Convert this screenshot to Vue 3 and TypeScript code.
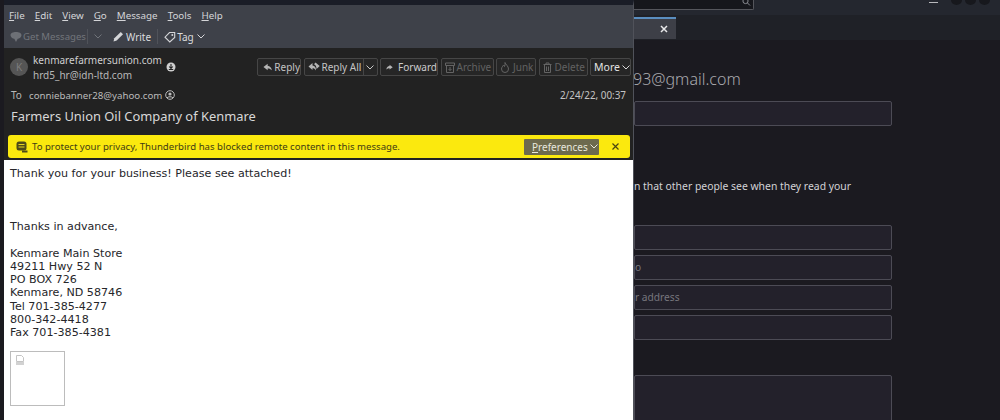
<script setup lang="ts">
const menus = [
  { key: 'F', rest: 'ile' },
  { key: 'E', rest: 'dit' },
  { key: 'V', rest: 'iew' },
  { key: 'G', rest: 'o' },
  { key: 'M', rest: 'essage' },
  { key: 'T', rest: 'ools' },
  { key: 'H', rest: 'elp' },
]
const bodyLines = [
  'Thank you for your business! Please see attached!',
  '', '', '',
  'Thanks in advance,',
  '',
  'Kenmare Main Store',
  '49211 Hwy 52 N',
  'PO BOX 726',
  'Kenmare, ND 58746',
  'Tel 701-385-4277',
  '800-342-4418',
  'Fax 701-385-4381',
]
</script>

<template>
  <div class="desktop">
    <section class="back">
      <header class="back-title">
        <div class="search"><svg class="search-icon" width="9" height="9" viewBox="0 0 9 9"><circle cx="3.5" cy="3" r="2.6" fill="none" stroke="#8a8c92"/><path d="M5.5 5l2.5 2.5" stroke="#8a8c92"/></svg></div>
        <div class="hamburger"></div>
        <div class="dots"><i></i><i></i><i></i></div>
      </header>
      <div class="back-tabs">
        <div class="tab"><svg width="8" height="8" viewBox="0 0 8 8"><path d="M1 1l6 6M7 1l-6 6" stroke="#e8e8ea" stroke-width="1.5"/></svg></div>
      </div>
      <div class="form">
        <div class="account">93@gmail.com</div>
        <div class="field first"></div>
        <p class="blurb">n that other people see when they read your</p>
        <div class="field-stack">
          <div class="field"></div>
          <div class="field ph">o</div>
          <div class="field ph">r address</div>
          <div class="field"></div>
        </div>
        <div class="field area"></div>
      </div>
    </section>

    <section class="mail">
      <div class="chrome">
        <nav class="menu">
          <span v-for="m in menus" :key="m.key"><u>{{ m.key }}</u>{{ m.rest }}</span>
        </nav>
        <div class="toolbar">
          <span class="tool off">
            <svg width="12" height="12" viewBox="0 0 12 12"><path d="M6 1c3 0 5.500 1 5.500 3.200 0 2-2.200 3.300-3.800 3.600L6 11 4.300 7.800C2.700 7.500.5 6.200.5 4.200.5 2 3 1 6 1z" fill="#6d7076"/></svg>
            Get Messages
          </span>
          <i class="sep"></i>
          <svg class="chev dim" width="8" height="5" viewBox="0 0 8 5"><path d="M.5.5L4 4 7.500.5" fill="none" stroke="#70747a"/></svg>
          <span class="tool write">
            <svg width="11" height="11" viewBox="0 0 11 11"><path d="M.5 10.500l.8-3.200L7.800 1l2.200 2.200-6.300 6.400z" fill="#d4d5d8"/></svg>
            Write
          </span>
          <i class="sep"></i>
          <span class="tool tag">
            <svg width="12" height="12" viewBox="0 0 12 12"><path d="M5.500 1.500h5.200v5L5.800 11 1 6.200z" fill="none" stroke="#d4d5d8" stroke-width="1.100"/><circle cx="8.300" cy="3.900" r="1" fill="#d4d5d8"/></svg>
            Tag
            <svg class="chev" width="8" height="5" viewBox="0 0 8 5"><path d="M.5.5L4 4 7.500.5" fill="none" stroke="#d4d5d8"/></svg>
          </span>
        </div>
      </div>

      <div class="head">
        <div class="from-row">
          <div class="avatar">K</div>
          <div class="from">
            <div class="from-name">kenmarefarmersunion.com</div>
            <div class="from-addr">hrd5_hr@idn-ltd.com</div>
          </div>
          <svg class="badge" width="10" height="10" viewBox="0 0 10 10"><circle cx="5" cy="5" r="4.500" fill="#cfcfcf"/><path d="M5 2v3.500M3.200 4.500L5 6.500l1.800-2M2.800 7.500h4.400" stroke="#222" stroke-width="1.100" fill="none"/></svg>
          <div class="actions">
            <button class="btn reply">
              <svg width="10" height="9" viewBox="0 0 10 9"><path d="M5 .5L.5 4 5 7.500V5.500c1.500 0 3 .3 4.500 2C9.200 4.500 7.500 2.800 5 2.500z" fill="#b5b5b5"/></svg>
              Reply
            </button>
            <div class="btn split">
              <span class="split-main">
                <svg width="12" height="10" viewBox="0 0 12 10"><path d="M4.500 1L.5 4.500 4.500 8V6.200c1.500 0 2.500.5 3.500 2.300.2-3-1.200-4.600-3.500-5zM7.500.5L11.700 4 8.500 7C8.500 4.800 7.800 3.200 6 2.300z" fill="#b5b5b5"/></svg>
                Reply All
              </span>
              <span class="split-arrow"><svg width="8" height="5" viewBox="0 0 8 5"><path d="M.5.500L4 4 7.500.5" fill="none" stroke="#c8c8c8"/></svg></span>
            </div>
            <button class="btn fwd">
              <svg width="10" height="9" viewBox="0 0 10 9"><path d="M5 .5L9.500 4 5 7.500V5.500c-1.500 0-3 .3-4.500 2C.8 4.500 2.500 2.800 5 2.500z" fill="#b5b5b5"/></svg>
              Forward
            </button>
            <button class="btn off arch">
              <svg width="10" height="11" viewBox="0 0 10 11"><path d="M.5 1h9v2.500h-9zM1.500 3.500h7v7h-7zM5 5v3.500M3.500 7L5 8.500 6.500 7" fill="none" stroke="#646464"/></svg>
              Archive
            </button>
            <button class="btn off junk">
              <svg width="10" height="11" viewBox="0 0 10 11"><path d="M5 .5c.5 2 3.500 3.500 3.500 6.500a3.500 3.500 0 0 1-7 0C1.500 5 3 4.500 3.500 3c.5.500.8.800 1 1.500C5 3.500 5.300 2 5 .5z" fill="none" stroke="#646464"/></svg>
              Junk
            </button>
            <button class="btn off del">
              <svg width="9" height="11" viewBox="0 0 9 11"><path d="M.5 2.500h8M3 2.500V1h3v1.500M1.500 2.500v8h6v-8M3.500 4.500v4.500M5.500 4.500v4.500" fill="none" stroke="#646464"/></svg>
              Delete
            </button>
            <button class="btn more">
              More
              <svg width="8" height="5" viewBox="0 0 8 5"><path d="M.5.500L4 4 7.500.5" fill="none" stroke="#d8d8d8"/></svg>
            </button>
          </div>
        </div>
        <div class="to-row">
          <span class="to-label">To</span>
          <span class="to-addr">conniebanner28@yahoo.com</span>
          <svg width="10" height="10" viewBox="0 0 10 10"><circle cx="5" cy="5" r="4.300" fill="none" stroke="#bdbdbd"/><circle cx="5" cy="4" r="1.600" fill="#bdbdbd"/><path d="M2 8c.7-1.700 5.300-1.700 6 0" stroke="#bdbdbd" fill="none"/></svg>
          <span class="date">2/24/22, 00:37</span>
        </div>
        <div class="subject">Farmers Union Oil Company of Kenmare</div>
      </div>

      <div class="notice">
        <svg class="notice-icon" width="12" height="12" viewBox="0 0 12 12"><rect x=".5" y=".5" width="10" height="9" rx="2.500" fill="#4d4a1a"/><path d="M2.500 3.500h6M2.500 6h6" stroke="#e6d320" stroke-width="1"/><path d="M6 9.500h5.500v2H6z" fill="#4d4a1a"/></svg>
        <span class="notice-text">To protect your privacy, Thunderbird has blocked remote content in this message.</span>
        <span class="prefs"><u>P</u>references<svg width="8" height="5" viewBox="0 0 8 5"><path d="M.5.500L4 4 7.500.5" fill="none" stroke="#e8e8e0"/></svg></span>
        <svg class="notice-close" width="7" height="7" viewBox="0 0 7 7"><path d="M.5.500l6 6M6.500.500l-6 6" stroke="#4a4510" stroke-width="1.200"/></svg>
      </div>

      <article class="body">
        <div v-for="(line, i) in bodyLines" :key="i" class="line">{{ line }}</div>
        <div class="broken">
          <svg width="10" height="11" viewBox="0 0 10 11"><path d="M1.500.5h5l2 2v4h-7z" fill="#fff" stroke="#c4c4c4"/><rect x="1" y="7" width="8" height="3" fill="#d2d2d2"/></svg>
        </div>
      </article>
    </section>
  </div>
</template>

<style scoped>
.desktop {
  position: relative;
  width: 1000px;
  height: 420px;
  overflow: hidden;
  background: #1b1a20;
  font-family: "Noto Sans", "Open Sans", sans-serif;
}
.back {
  display: flex;
  flex-direction: column;
  height: 100%;
  padding-left: 634px;
  box-sizing: border-box;
}
.back-title {
  height: 15px;
  flex: none;
  display: flex;
  align-items: flex-start;
  background: #24272f;
  position: relative;
}
.search {
  width: 119px;
  height: 9px;
  background: #16171c;
  border: 1px solid #55565c;
  border-top: 0;
  border-left: 0;
  border-radius: 0 0 2px 0;
  position: relative;
}
.search-icon {
  position: absolute;
  right: 2px;
  top: -2px;
}
.hamburger {
  width: 9px;
  height: 2px;
  margin: 0 0 0 175px;
  border-bottom: 1px solid #b8b9bd;
}
.dots {
  display: flex;
  gap: 3px;
  margin-left: 13px;
  margin-top: -5px;
}
.dots i {
  width: 11px;
  height: 10px;
  border-radius: 50%;
  background: #17181d;
}
.back-tabs {
  height: 25px;
  flex: none;
  background: #1f2127;
}
.tab {
  width: 42px;
  height: 22px;
  margin-top: 2px;
  box-sizing: border-box;
  border-top: 2px solid #5a8ec0;
  background: #3d3f47;
  display: flex;
  align-items: center;
  justify-content: flex-end;
  padding-right: 8px;
}
.form {
  width: 258px;
  display: flex;
  flex-direction: column;
  color: #c9c9cd;
}
.account {
  margin-top: 28px;
  margin-left: -1px;
  font-size: 16px;
  line-height: 22px;
  font-weight: 300;
  color: #a9a9ae;
  white-space: nowrap;
}
.field {
  height: 25px;
  box-sizing: border-box;
  background: #23212b;
  border: 1px solid #4c4b55;
  border-radius: 2px;
}
.first {
  margin-top: 11px;
}
.blurb {
  margin: 52px 0 0;
  font-size: 10.400px;
  line-height: 16px;
  color: #d3d3d6;
  white-space: nowrap;
}
.field-stack {
  margin-top: 31px;
  display: flex;
  flex-direction: column;
  gap: 5px;
}
.ph {
  font-size: 10.200px;
  line-height: 23px;
  color: #77767d;
  white-space: nowrap;
}
.area {
  margin-top: 35px;
  height: 60px;
}

.mail {
  position: absolute;
  left: 4px;
  top: 0;
  width: 630px;
  height: 420px;
  display: flex;
  flex-direction: column;
  background: #222222;
  border-right: 1px solid #50525a;
  border-top: 5px solid #1a1d27;
  box-sizing: border-box;
}
.chrome {
  height: 43px;
  flex: none;
  background: #3e4149;
  display: flex;
  flex-direction: column;
}
.menu {
  display: flex;
  gap: 10px;
  padding: 2px 0 0 5px;
  font-size: 9.800px;
  line-height: 17px;
  color: #d4d5d8;
}
.menu u {
  text-underline-offset: 1px;
}
.toolbar {
  margin-top: 4px;
  height: 17px;
  padding-left: 6px;
  display: flex;
  align-items: center;
  font-size: 10px;
  color: #dadbde;
}
.tool {
  display: flex;
  align-items: center;
  gap: 1px;
}
.tool.off {
  color: #72757b;
  font-size: 9.600px;
}
.sep {
  width: 1px;
  height: 15px;
  background: #50535a;
  margin-left: 1px;
}
.chev.dim {
  margin-left: 6px;
}
.write {
  margin-left: 11px;
  gap: 2px;
}
.write + .sep {
  margin-left: 6px;
}
.tag {
  margin-left: 6px;
  font-size: 10px;
}
.tag .chev {
  margin-left: 2px;
}
.head {
  flex: none;
  height: 87px;
  display: flex;
  flex-direction: column;
  color: #d6d6d6;
}
.from-row {
  display: flex;
  align-items: center;
  padding-top: 4px;
  height: 30px;
}
.avatar {
  width: 18px;
  height: 18px;
  margin-left: 6px;
  border-radius: 50%;
  background: #555;
  color: #7d7d7d;
  font-size: 10px;
  line-height: 18px;
  text-align: center;
}
.from {
  margin-left: 5px;
  width: 134px;
}
.from-name {
  font-size: 10px;
  line-height: 15px;
  color: #cfcfcf;
  white-space: nowrap;
}
.from-addr {
  font-size: 10px;
  line-height: 14px;
  color: #b8b8b8;
  white-space: nowrap;
}
.badge {
  margin-left: -1px;
}
.actions {
  margin-left: 81px;
  display: flex;
  gap: 2.500px;
}
.btn {
  height: 18px;
  flex: none;
  box-sizing: border-box;
  display: flex;
  align-items: center;
  gap: 2px;
  padding: 0 0 0 5px;
  margin: 0;
  background: #262626;
  border: 1px solid #464646;
  border-radius: 2px;
  color: #c4c4c4;
  font: 10px "Noto Sans", "Open Sans", sans-serif;
  white-space: nowrap;
}
.reply { width: 44px; }
.split {
  width: 74px;
  padding: 0;
}
.split-main {
  display: flex;
  align-items: center;
  gap: 2px;
  padding-left: 3px;
  flex: 1;
  height: 100%;
}
.split-arrow {
  width: 16px;
  height: 100%;
  display: flex;
  align-items: center;
  justify-content: center;
  border-left: 1px solid #464646;
}
.fwd { width: 58px; gap: 5px; color: #cccccc; }
.arch { width: 53px; padding-left: 3px; }
.junk { width: 40px; gap: 3px; padding-left: 3px; }
.del { width: 49px; gap: 3px; padding-left: 3px; }
.more { width: 41px; color: #e2e2e2; padding-left: 3px; font-size: 10.500px; }
.off { color: #626262; }
.to-row {
  display: flex;
  align-items: center;
  gap: 2px;
  margin-top: 5px;
  height: 16px;
  padding: 0 7px;
}
.to-label {
  font-size: 10px;
  color: #b8b8b8;
  width: 16px;
}
.to-addr {
  font-size: 9.700px;
  color: #bbbbbb;
  margin-right: 1px;
}
.date {
  margin-left: auto;
  font-size: 9.900px;
  color: #c4c4c4;
}
.subject {
  margin-top: 3px;
  padding-left: 7px;
  font-size: 12.900px;
  line-height: 20px;
  color: #d8d8d8;
}
.notice {
  flex: none;
  margin: 0 3px 0 4px;
  height: 23px;
  box-sizing: border-box;
  display: flex;
  align-items: center;
  background: #fbe90e;
  border-radius: 3px;
  padding-left: 8px;
}
.notice-icon {
  flex: none;
}
.notice-text {
  margin-left: 4px;
  font-size: 9.600px;
  color: #3f3c14;
  white-space: nowrap;
  width: 492px;
}
.prefs {
  width: 75px;
  height: 16px;
  flex: none;
  box-sizing: border-box;
  background: #6d6a4e;
  color: #e8e8de;
  font-size: 10px;
  line-height: 16px;
  padding-left: 8px;
  display: flex;
  align-items: center;
  border-radius: 1px;
}
.prefs svg {
  margin-left: 2px;
}
.notice-close {
  margin-left: 13px;
  flex: none;
}
.body {
  flex: 1;
  margin-top: 2px;
  background: #ffffff;
  color: #26262a;
  padding: 7px 0 0 6px;
  font-family: "DejaVu Sans", sans-serif;
  font-size: 11.120px;
  line-height: 13.250px;
}
.line {
  height: 13.250px;
  white-space: nowrap;
}
.broken {
  width: 55px;
  height: 55px;
  margin-top: 12px;
  box-sizing: border-box;
  border: 1px solid #bcbcbc;
  padding: 3px 4px;
  line-height: 0;
}
</style>
